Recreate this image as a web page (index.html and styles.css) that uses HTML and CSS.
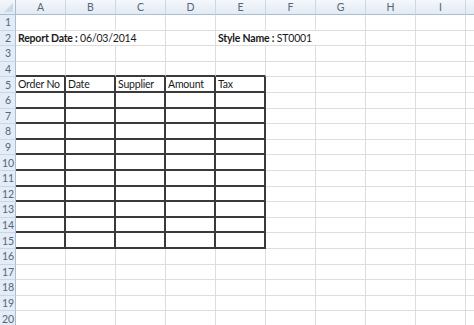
FILE: index.html
```html
<!DOCTYPE html>
<html>
<head>
<meta charset="utf-8">
<link rel="stylesheet" href="styles.css">
</head>
<body>
<div class="sheet">
  <div class="h corner"><span class="tri"></span></div>
  <div class="h">A</div><div class="h">B</div><div class="h">C</div><div class="h">D</div><div class="h">E</div><div class="h">F</div><div class="h">G</div><div class="h">H</div><div class="h">I</div><div class="h"></div>

  <div class="rh">1</div>
  <div class="c"></div><div class="c"></div><div class="c"></div><div class="c"></div><div class="c"></div><div class="c"></div><div class="c"></div><div class="c"></div><div class="c"></div><div class="c"></div>

  <div class="rh">2</div>
  <div class="c span3"><b>Report Date :</b>&nbsp;06/03/2014</div><div class="c"></div><div class="c span3"><b>Style Name :</b>&nbsp;ST0001</div><div class="c"></div><div class="c"></div><div class="c"></div>

  <div class="rh">3</div>
  <div class="c"></div><div class="c"></div><div class="c"></div><div class="c"></div><div class="c"></div><div class="c"></div><div class="c"></div><div class="c"></div><div class="c"></div><div class="c"></div>

  <div class="rh">4</div>
  <div class="c bb"></div><div class="c bb"></div><div class="c bb"></div><div class="c bb"></div><div class="c bb"></div><div class="c"></div><div class="c"></div><div class="c"></div><div class="c"></div><div class="c"></div>

  <div class="rh">5</div>
  <div class="c t">Order No</div><div class="c t">Date</div><div class="c t">Supplier</div><div class="c t">Amount</div><div class="c t">Tax</div><div class="c"></div><div class="c"></div><div class="c"></div><div class="c"></div><div class="c"></div>

  <div class="rh">6</div>
  <div class="c t"></div><div class="c t"></div><div class="c t"></div><div class="c t"></div><div class="c t"></div><div class="c"></div><div class="c"></div><div class="c"></div><div class="c"></div><div class="c"></div>
  <div class="rh">7</div>
  <div class="c t"></div><div class="c t"></div><div class="c t"></div><div class="c t"></div><div class="c t"></div><div class="c"></div><div class="c"></div><div class="c"></div><div class="c"></div><div class="c"></div>
  <div class="rh">8</div>
  <div class="c t"></div><div class="c t"></div><div class="c t"></div><div class="c t"></div><div class="c t"></div><div class="c"></div><div class="c"></div><div class="c"></div><div class="c"></div><div class="c"></div>
  <div class="rh">9</div>
  <div class="c t"></div><div class="c t"></div><div class="c t"></div><div class="c t"></div><div class="c t"></div><div class="c"></div><div class="c"></div><div class="c"></div><div class="c"></div><div class="c"></div>
  <div class="rh">10</div>
  <div class="c t"></div><div class="c t"></div><div class="c t"></div><div class="c t"></div><div class="c t"></div><div class="c"></div><div class="c"></div><div class="c"></div><div class="c"></div><div class="c"></div>
  <div class="rh">11</div>
  <div class="c t"></div><div class="c t"></div><div class="c t"></div><div class="c t"></div><div class="c t"></div><div class="c"></div><div class="c"></div><div class="c"></div><div class="c"></div><div class="c"></div>
  <div class="rh">12</div>
  <div class="c t"></div><div class="c t"></div><div class="c t"></div><div class="c t"></div><div class="c t"></div><div class="c"></div><div class="c"></div><div class="c"></div><div class="c"></div><div class="c"></div>
  <div class="rh">13</div>
  <div class="c t"></div><div class="c t"></div><div class="c t"></div><div class="c t"></div><div class="c t"></div><div class="c"></div><div class="c"></div><div class="c"></div><div class="c"></div><div class="c"></div>
  <div class="rh">14</div>
  <div class="c t"></div><div class="c t"></div><div class="c t"></div><div class="c t"></div><div class="c t"></div><div class="c"></div><div class="c"></div><div class="c"></div><div class="c"></div><div class="c"></div>
  <div class="rh">15</div>
  <div class="c t"></div><div class="c t"></div><div class="c t"></div><div class="c t"></div><div class="c t"></div><div class="c"></div><div class="c"></div><div class="c"></div><div class="c"></div><div class="c"></div>

  <div class="rh">16</div>
  <div class="c"></div><div class="c"></div><div class="c"></div><div class="c"></div><div class="c"></div><div class="c"></div><div class="c"></div><div class="c"></div><div class="c"></div><div class="c"></div>
  <div class="rh">17</div>
  <div class="c"></div><div class="c"></div><div class="c"></div><div class="c"></div><div class="c"></div><div class="c"></div><div class="c"></div><div class="c"></div><div class="c"></div><div class="c"></div>
  <div class="rh">18</div>
  <div class="c"></div><div class="c"></div><div class="c"></div><div class="c"></div><div class="c"></div><div class="c"></div><div class="c"></div><div class="c"></div><div class="c"></div><div class="c"></div>
  <div class="rh">19</div>
  <div class="c"></div><div class="c"></div><div class="c"></div><div class="c"></div><div class="c"></div><div class="c"></div><div class="c"></div><div class="c"></div><div class="c"></div><div class="c"></div>
  <div class="rh">20</div>
  <div class="c"></div><div class="c"></div><div class="c"></div><div class="c"></div><div class="c"></div><div class="c"></div><div class="c"></div><div class="c"></div><div class="c"></div><div class="c"></div>
</div>
</body>
</html>
```
FILE: styles.css
```css
html, body {
  margin: 0;
  padding: 0;
  background: #ffffff;
  overflow: hidden;
}

.sheet {
  display: grid;
  grid-template-columns: 16px repeat(10, 50px);
  grid-template-rows: 15px repeat(20, 15.6px);
  font-family: Lato, "Open Sans", sans-serif;
  width: 474px;
  height: 325px;
  overflow: hidden;
}

.sheet > div {
  box-sizing: border-box;
  white-space: nowrap;
  overflow: visible;
}

.h {
  background: linear-gradient(#f4f7fb, #e3eaf4);
  border-right: 1px solid #cdd7e3;
  border-bottom: 1px solid #a9bdd3;
  color: #56657a;
  font-size: 10.5px;
  display: flex;
  align-items: center;
  justify-content: center;
}

.corner {
  position: relative;
  border-right: 1px solid #a9bdd3;
}

.tri {
  position: absolute;
  right: 2px;
  bottom: 2px;
  width: 0;
  height: 0;
  border-left: 9px solid transparent;
  border-bottom: 9px solid #cfd9e5;
}

.rh {
  background: #e4ecf7;
  border-right: 1px solid #a9bdd3;
  border-bottom: 1px solid #cdd7e3;
  color: #56657a;
  font-size: 10.5px;
  display: flex;
  align-items: center;
  justify-content: center;
  padding-left: 1px;
}

.c {
  border-right: 1px solid #dedede;
  border-bottom: 1px solid #dedede;
  color: #1a1a1a;
  font-size: 10.5px;
  letter-spacing: -0.2px;
  padding: 0 2px 1px;
  display: flex;
  align-items: flex-end;
}

.span3 {
  grid-column: span 3;
}

.c b {
  font-weight: 700;
}

.bb {
  border-bottom: 2px solid #3a3a3a;
}

.t {
  border-right: 2px solid #3a3a3a;
  border-bottom: 2px solid #3a3a3a;
}
```
